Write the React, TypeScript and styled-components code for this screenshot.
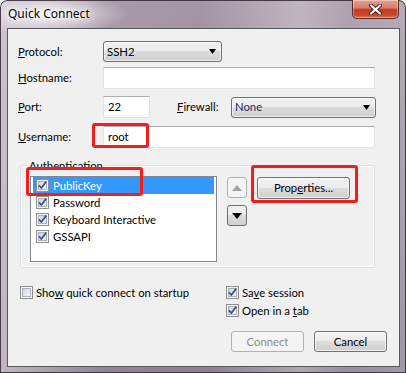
import React from "react";
import styled, { createGlobalStyle } from "styled-components";

const GlobalStyle = createGlobalStyle`
  html, body { margin: 0; padding: 0; background: #ffffff; }
  body { font-family: Lato, "Noto Sans", "DejaVu Sans", sans-serif; font-size: 11.3px; color: #000; }
  * { box-sizing: border-box; }
`;

const Window = styled.div`
  width: 406px;
  height: 373px;
  display: flex;
  flex-direction: column;
  border-radius: 7px 7px 0 0;
  overflow: hidden;
  background:
    radial-gradient(ellipse 80px 22px at 48px 14px, rgba(255,255,255,0.85), rgba(255,255,255,0) 100%),
    linear-gradient(to right, rgba(255,255,255,0.45) 0%, rgba(255,255,255,0.05) 25%, rgba(255,255,255,0) 50%, rgba(255,255,255,0.3) 74%, rgba(255,255,255,0.12) 86%, rgba(255,255,255,0.2) 100%),
    linear-gradient(to bottom, #a596a6 0%, #9a8a9b 40%, #8e7e8f 100%);
  box-shadow: inset 0 0 0 1px rgba(48, 38, 50, 0.85);
`;

const TitleBar = styled.div`
  height: 28px;
  flex-shrink: 0;
  display: flex;
  align-items: flex-start;
`;

const Title = styled.div`
  margin: 6px 0 0 8px;
  font-family: "Noto Sans", Lato, sans-serif;
  font-size: 12px;
  line-height: 16px;
  color: #000;
  text-shadow: 0 0 5px #fff, 0 0 9px #fff, 0 0 2px rgba(255,255,255,0.9);
`;

const CloseButton = styled.div`
  margin-left: auto;
  margin-right: 7px;
  width: 47px;
  height: 19px;
  border: 1px solid #5a2c28;
  border-top: none;
  border-radius: 0 0 5px 5px;
  background: linear-gradient(to bottom, #e6a091 0%, #d97d6b 42%, #c53a20 55%, #c94a2e 85%, #dc7354 100%);
  box-shadow: inset 0 0 0 1px rgba(255, 255, 255, 0.35);
  display: flex;
  align-items: center;
  justify-content: center;
`;

const Client = styled.div`
  position: relative;
  flex: 1;
  margin: 0 6px 6px 7px;
  border: 1px solid #5c5660;
  background: #f0f0f0;
  display: flex;
  flex-direction: column;
`;

const FormRow = styled.div<{ $top: number; $h: number }>`
  display: flex;
  align-items: center;
  height: ${(p) => p.$h}px;
  margin-top: ${(p) => p.$top}px;
  padding-left: 10px;
`;

const Label = styled.div<{ $w: number }>`
  width: ${(p) => p.$w}px;
  flex-shrink: 0;
  line-height: 16px;
`;

const TextBox = styled.div<{ $w: number }>`
  width: ${(p) => p.$w}px;
  height: 22px;
  background: #fff;
  border: 1px solid #e2e3ea;
  border-top-color: #abadb3;
  padding-left: 4px;
  display: flex;
  align-items: center;
  line-height: 16px;
`;

const ComboBox = styled.div<{ $w: number }>`
  width: ${(p) => p.$w}px;
  height: 21px;
  border: 1px solid #707070;
  border-radius: 3px;
  background: linear-gradient(to bottom, #f2f2f2 0%, #ebebeb 50%, #dddddd 50%, #cfcfcf 100%);
  box-shadow: inset 0 0 0 1px rgba(255,255,255,0.6);
  display: flex;
  align-items: center;
  padding: 0 5px 0 3px;
`;

const ComboText = styled.span<{ $color?: string }>`
  flex: 1;
  line-height: 16px;
  color: ${(p) => p.$color || "#000"};
`;

const Gap = styled.div<{ $w: number }>`
  width: ${(p) => p.$w}px;
  flex-shrink: 0;
`;

const GroupBox = styled.div`
  position: relative;
  margin: 17px 0 0 12px;
  width: 355px;
  height: 103px;
  border: 1px solid #d5dfe5;
  border-radius: 3px;
  box-shadow: inset 0 0 0 1px #ffffff;
  padding: 10px 0 0 9px;
  display: flex;
  align-items: flex-start;
`;

const GroupLabel = styled.span`
  position: absolute;
  top: -8px;
  left: 6px;
  padding: 0 2px;
  background: #f0f0f0;
  line-height: 16px;
`;

const ListBox = styled.div`
  width: 187px;
  height: 86px;
  border: 1px solid #828790;
  background: #fff;
  padding: 0 2px;
  flex-shrink: 0;
`;

const ListRow = styled.div<{ $selected?: boolean }>`
  height: 17px;
  display: flex;
  align-items: center;
  padding-left: 3px;
  gap: 4px;
  background: ${(p) => (p.$selected ? "#3399ff" : "transparent")};
  color: ${(p) => (p.$selected ? "#fff" : "#000")};
  line-height: 16px;
`;

const SpinColumn = styled.div`
  display: flex;
  flex-direction: column;
  gap: 7px;
  margin: 1px 0 0 10px;
`;

const SpinButton = styled.div<{ $disabled?: boolean }>`
  width: 20px;
  height: 21px;
  border: 1px solid ${(p) => (p.$disabled ? "#adb2b5" : "#707070")};
  border-radius: 3px;
  background: ${(p) =>
    p.$disabled
      ? "#f4f4f4"
      : "linear-gradient(to bottom, #f2f2f2 0%, #ebebeb 50%, #dddddd 50%, #cfcfcf 100%)"};
  display: flex;
  align-items: center;
  justify-content: center;
`;

const PushButton = styled.div<{ $w: number; $h: number; $disabled?: boolean }>`
  width: ${(p) => p.$w}px;
  height: ${(p) => p.$h}px;
  border: 1px solid ${(p) => (p.$disabled ? "#adb2b5" : "#707070")};
  border-radius: 3px;
  background: ${(p) =>
    p.$disabled
      ? "#f4f4f4"
      : "linear-gradient(to bottom, #f2f2f2 0%, #ebebeb 50%, #dddddd 50%, #cfcfcf 100%)"};
  box-shadow: inset 0 0 0 1px ${(p) => (p.$disabled ? "transparent" : "rgba(255,255,255,0.7)")};
  color: ${(p) => (p.$disabled ? "#8d8d8d" : "#000")};
  display: flex;
  align-items: center;
  justify-content: center;
  line-height: 16px;
  flex-shrink: 0;
`;

const PropButtonWrap = styled.div`
  margin: 1px 0 0 10px;
`;

const OptionsRow = styled.div`
  display: flex;
  margin-top: 18px;
  padding-left: 12px;
`;

const OptionsLeft = styled.div`
  width: 206px;
  flex-shrink: 0;
`;

const OptionsRight = styled.div`
  display: flex;
  flex-direction: column;
  gap: 5px;
`;

const CheckItem = styled.div`
  display: flex;
  align-items: center;
  gap: 3px;
  height: 13px;
  line-height: 16px;
`;

const ButtonRow = styled.div`
  display: flex;
  justify-content: flex-end;
  gap: 10px;
  margin-top: 14px;
  padding-right: 12px;
`;

const RedMark = styled.div<{ $x: number; $y: number; $w: number; $h: number }>`
  position: absolute;
  left: ${(p) => p.$x}px;
  top: ${(p) => p.$y}px;
  width: ${(p) => p.$w}px;
  height: ${(p) => p.$h}px;
  border: 3px solid #f41d1d;
  border-radius: 3px;
  pointer-events: none;
`;

const Check: React.FC<{ checked?: boolean }> = ({ checked }) => (
  <svg width="13" height="13" viewBox="0 0 13 13" style={{ flexShrink: 0 }}>
    <defs>
      <linearGradient id="cbFill" x1="0" y1="0" x2="1" y2="1">
        <stop offset="0" stopColor="#cdd1d6" />
        <stop offset="1" stopColor="#fafafa" />
      </linearGradient>
    </defs>
    <rect x="0.5" y="0.5" width="12" height="12" fill="#f6f6f6" stroke="#8e8f8f" />
    <rect x="2.5" y="2.5" width="8" height="8" fill="url(#cbFill)" stroke="#aeb3b9" />
    {checked && (
      <path d="M3 6.3 L5.4 9 L10.2 2.6" fill="none" stroke="#3b5394" strokeWidth="1.8" strokeLinejoin="round" />
    )}
  </svg>
);

const ArrowDown: React.FC<{ color?: string; w?: number }> = ({ color = "#000", w = 7 }) => (
  <svg width={w} height={Math.ceil(w / 2) + 1} viewBox={`0 0 ${w} ${Math.ceil(w / 2) + 1}`}>
    <path d={`M0 0 L${w} 0 L${w / 2} ${Math.ceil(w / 2) + 1} Z`} fill={color} />
  </svg>
);

const ArrowUp: React.FC<{ color?: string; w?: number }> = ({ color = "#000", w = 9 }) => (
  <svg width={w} height={Math.ceil(w / 2) + 1} viewBox={`0 0 ${w} ${Math.ceil(w / 2) + 1}`}>
    <path d={`M0 ${Math.ceil(w / 2) + 1} L${w} ${Math.ceil(w / 2) + 1} L${w / 2} 0 Z`} fill={color} />
  </svg>
);

const CloseGlyph = () => (
  <svg width="13" height="11" viewBox="0 0 13 11">
    <path d="M2 1.5 L11 9.5 M11 1.5 L2 9.5" stroke="#3b2320" strokeWidth="4" strokeLinecap="round" />
    <path d="M2 1.5 L11 9.5 M11 1.5 L2 9.5" stroke="#ffffff" strokeWidth="2.2" strokeLinecap="round" />
  </svg>
);

const authItems = [
  { name: "PublicKey", selected: true },
  { name: "Password" },
  { name: "Keyboard Interactive" },
  { name: "GSSAPI" },
];

export default function App() {
  return (
    <>
      <GlobalStyle />
      <Window>
        <TitleBar>
          <Title>Quick Connect</Title>
          <CloseButton>
            <CloseGlyph />
          </CloseButton>
        </TitleBar>
        <Client>
          <FormRow $top={12} $h={21}>
            <Label $w={85}>
              <u>P</u>rotocol:
            </Label>
            <ComboBox $w={119}>
              <ComboText>SSH2</ComboText>
              <ArrowDown />
            </ComboBox>
          </FormRow>
          <FormRow $top={5} $h={22}>
            <Label $w={85}>
              <u>H</u>ostname:
            </Label>
            <TextBox $w={272} />
          </FormRow>
          <FormRow $top={7} $h={22}>
            <Label $w={85}>
              <u>P</u>ort:
            </Label>
            <TextBox $w={47}>22</TextBox>
            <Gap $w={27} />
            <Label $w={54}>
              <u>F</u>irewall:
            </Label>
            <ComboBox $w={145}>
              <ComboText $color="#1b2a5c">None</ComboText>
              <ArrowDown />
            </ComboBox>
          </FormRow>
          <FormRow $top={8} $h={22}>
            <Label $w={85}>
              <u>U</u>sername:
            </Label>
            <TextBox $w={272}>root</TextBox>
          </FormRow>

          <GroupBox>
            <GroupLabel>Authentication</GroupLabel>
            <ListBox>
              {authItems.map((it) => (
                <ListRow key={it.name} $selected={it.selected}>
                  <Check checked />
                  <span>{it.name}</span>
                </ListRow>
              ))}
            </ListBox>
            <SpinColumn>
              <SpinButton $disabled>
                <ArrowUp color="#a2a2a2" w={10} />
              </SpinButton>
              <SpinButton>
                <ArrowDown color="#000" w={10} />
              </SpinButton>
            </SpinColumn>
            <PropButtonWrap>
              <PushButton $w={93} $h={22}>
                Prop<u>e</u>rties...
              </PushButton>
            </PropButtonWrap>
          </GroupBox>

          <OptionsRow>
            <OptionsLeft>
              <CheckItem>
                <Check />
                <span>
                  Sho<u>w</u> quick connect on startup
                </span>
              </CheckItem>
            </OptionsLeft>
            <OptionsRight>
              <CheckItem>
                <Check checked />
                <span>
                  Sa<u>v</u>e session
                </span>
              </CheckItem>
              <CheckItem>
                <Check checked />
                <span>
                  Open in a <u>t</u>ab
                </span>
              </CheckItem>
            </OptionsRight>
          </OptionsRow>

          <ButtonRow>
            <PushButton $w={73} $h={21} $disabled>
              Connect
            </PushButton>
            <PushButton $w={73} $h={21}>
              Cancel
            </PushButton>
          </ButtonRow>

          <RedMark $x={84} $y={94} $w={57} $h={25} />
          <RedMark $x={18} $y={138} $w={117} $h={29} />
          <RedMark $x={243} $y={136} $w={107} $h={38} />
        </Client>
      </Window>
    </>
  );
}
